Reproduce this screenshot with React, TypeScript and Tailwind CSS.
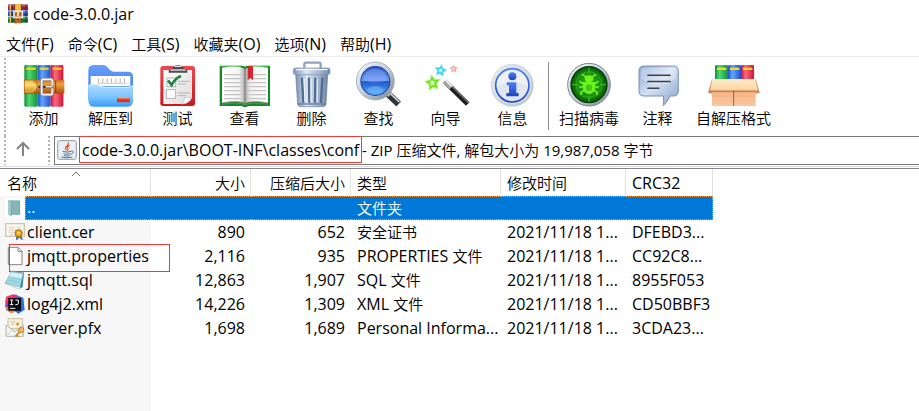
import React from "react";

type IconProps = { children: React.ReactNode };

/* Large toolbar drawings share one 138-unit canvas shown at 46px. */
function BigIcon({ children }: IconProps) {
  return (
    <svg viewBox="0 0 138 138" className="block size-[46px] overflow-visible" aria-hidden="true">
      {children}
    </svg>
  );
}

/* Row drawings share one 60-unit canvas shown at 20px. */
function SmallIcon({ children }: IconProps) {
  return (
    <svg viewBox="0 0 60 60" className="block size-5 shrink-0" aria-hidden="true">
      {children}
    </svg>
  );
}

/* Chinese runs are set one pixel smaller than the Latin text round them. */
function Mixed({ text }: { text: string }) {
  return (
    <>
      {text.split(/([\u4e00-\u9fff]+)/).map((part, i) =>
        i % 2 === 1 ? (
          <span key={i} className="text-[15px] font-[350]">
            {part}
          </span>
        ) : (
          part
        ),
      )}
    </>
  );
}

function Gradients() {
  return (
    <svg className="absolute size-0" aria-hidden="true">
      <defs>
        <linearGradient id="gGreen">
          <stop offset="0" stopColor="#128a35" />
          <stop offset=".35" stopColor="#4fd873" />
          <stop offset="1" stopColor="#14923a" />
        </linearGradient>
        <linearGradient id="gBlue">
          <stop offset="0" stopColor="#1d52c8" />
          <stop offset=".35" stopColor="#62a6fb" />
          <stop offset="1" stopColor="#1f4fd0" />
        </linearGradient>
        <linearGradient id="gRed">
          <stop offset="0" stopColor="#c90f35" />
          <stop offset=".35" stopColor="#fb6a80" />
          <stop offset="1" stopColor="#d80f35" />
        </linearGradient>
        <linearGradient id="gBelt" x2="0" y2="1">
          <stop offset="0" stopColor="#c87020" />
          <stop offset=".3" stopColor="#f0a040" />
          <stop offset="1" stopColor="#a8500c" />
        </linearGradient>
        <linearGradient id="gTip" x2="0" y2="1">
          <stop offset="0" stopColor="#e8a838" />
          <stop offset=".35" stopColor="#ffdc70" />
          <stop offset="1" stopColor="#c07818" />
        </linearGradient>
        <linearGradient id="gFolderBack" x2="0" y2="1">
          <stop offset="0" stopColor="#6aa0ff" />
          <stop offset="1" stopColor="#2a6ee8" />
        </linearGradient>
        <linearGradient id="gFolder" x2="0" y2="1">
          <stop offset="0" stopColor="#b4e0ff" />
          <stop offset=".6" stopColor="#7cc4ff" />
          <stop offset="1" stopColor="#3a9cff" />
        </linearGradient>
        <linearGradient id="gRedBoard" x2="0" y2="1">
          <stop offset="0" stopColor="#f2474c" />
          <stop offset="1" stopColor="#c8191e" />
        </linearGradient>
        <linearGradient id="gPaper" x2="1" y2="1">
          <stop offset="0" stopColor="#ffffff" />
          <stop offset="1" stopColor="#dcdcdc" />
        </linearGradient>
        <linearGradient id="gPageL">
          <stop offset="0" stopColor="#fff" />
          <stop offset=".75" stopColor="#f2f2f2" />
          <stop offset="1" stopColor="#a8a8a8" />
        </linearGradient>
        <linearGradient id="gPageR">
          <stop offset="0" stopColor="#a8a8a8" />
          <stop offset=".25" stopColor="#f2f2f2" />
          <stop offset="1" stopColor="#fff" />
        </linearGradient>
        <linearGradient id="gBin">
          <stop offset="0" stopColor="#7890b0" />
          <stop offset=".35" stopColor="#dce6f2" />
          <stop offset=".7" stopColor="#a6b8d0" />
          <stop offset="1" stopColor="#6c84a6" />
        </linearGradient>
        <linearGradient id="gSteel" x2="1" y2="1">
          <stop offset="0" stopColor="#f4f8fc" />
          <stop offset=".45" stopColor="#c8d2dc" />
          <stop offset="1" stopColor="#7c8894" />
        </linearGradient>
        <linearGradient id="gSilver" x2="1" y2="1">
          <stop offset="0" stopColor="#eef2f6" />
          <stop offset="1" stopColor="#b4c0cc" />
        </linearGradient>
        <linearGradient id="gLens" x2="0" y2="1">
          <stop offset="0" stopColor="#2a58c8" />
          <stop offset=".48" stopColor="#6f9cf0" />
          <stop offset=".52" stopColor="#2358d0" />
          <stop offset="1" stopColor="#58a8f8" />
        </linearGradient>
        <linearGradient id="gInfo" x2="0" y2="1">
          <stop offset="0" stopColor="#4a80f0" />
          <stop offset="1" stopColor="#1c46c4" />
        </linearGradient>
        <radialGradient id="gScan">
          <stop offset="0" stopColor="#2fb41a" />
          <stop offset=".7" stopColor="#1c8c12" />
          <stop offset="1" stopColor="#0a5a08" />
        </radialGradient>
        <linearGradient id="gBubble" x2="1" y2="1">
          <stop offset="0" stopColor="#8ca8d4" />
          <stop offset=".45" stopColor="#d4e0f2" />
          <stop offset="1" stopColor="#86a0c8" />
        </linearGradient>
        <linearGradient id="gBox" x2="0" y2="1">
          <stop offset="0" stopColor="#e89868" />
          <stop offset="1" stopColor="#fcc8a0" />
        </linearGradient>
        <linearGradient id="gFlap" x2="0" y2="1">
          <stop offset="0" stopColor="#ffeccc" />
          <stop offset="1" stopColor="#fdd6a0" />
        </linearGradient>
      </defs>
    </svg>
  );
}

const AddIcon = () => (
  <BigIcon>
    <rect x="10" y="9" width="40" height="125" rx="4" fill="url(#gGreen)" />
    <rect x="50" y="9" width="39" height="125" rx="4" fill="url(#gBlue)" />
    <rect x="89" y="9" width="38" height="125" rx="4" fill="url(#gRed)" />
    <path d="M16 17h28v6H16zM56 17h27v6H56zM95 17h27v6H95z" fill="#ffd71e" />
    <rect x="10" y="54" width="120" height="41" rx="4" fill="url(#gBelt)" />
    <path d="M10 54h25q14 9 14 20t-14 21H10z" fill="url(#gTip)" stroke="#a86010" strokeWidth="2" />
    <path d="M15 60h18q9 6 9 14t-9 15H15" fill="none" stroke="#fff0a8" strokeWidth="2" strokeDasharray="4 3" />
    <circle cx="56" cy="75" r="4" fill="#54280a" />
    <rect x="62" y="52" width="32" height="46" rx="5" fill="none" stroke="#8c8c8c" strokeWidth="9" />
    <rect x="62" y="52" width="32" height="46" rx="5" fill="none" stroke="#f2f2f2" strokeWidth="5" />
    <path d="M76 75h20" stroke="#6e6e6e" strokeWidth="8" />
    <path d="M74 74h20" stroke="#f4f4f4" strokeWidth="4" />
    <circle cx="70" cy="75" r="4" fill="#54280a" />
    <path d="M104 56v37" stroke="#8c440c" strokeWidth="3" />
  </BigIcon>
);

const ExtractIcon = () => (
  <BigIcon>
    <path d="M1 24Q2 9 18 9h28q7 0 12 6l8 9q5 5 12 5h42q15 0 15 15v68H1z" fill="url(#gFolderBack)" />
    <path d="M8 42h119v30H8z" fill="#fff" />
    <path d="M30 56h82" stroke="#b8b8b8" strokeWidth="14" strokeDasharray="3 10" />
    <path d="M28 64h88" stroke="#d8d8d8" strokeWidth="5" />
    <path d="M1 73q0-7 9-7h12q7 0 13 4t14 4h72q14 0 14-12v54q0 18-18 18H19q-18 0-18-18z" fill="url(#gFolder)" />
    <path d="M3 74q1-6 9-6h10q7 0 13 4t14 4h72q8 0 12-5" fill="none" stroke="#dff3ff" strokeWidth="3" />
    <rect x="87" y="108" width="38" height="13" rx="2" fill="#d93218" />
    <path d="M89 110h34" stroke="#ff8260" strokeWidth="3" />
  </BigIcon>
);

const TestIcon = () => (
  <BigIcon>
    <rect x="16" y="12" width="104" height="120" rx="8" fill="url(#gRedBoard)" />
    <path d="M25 24h86v82q-4 17-28 20H25z" fill="url(#gPaper)" />
    <path d="M111 104q-10 6-23 3 2 13-8 19 23 0 31-22z" fill="#fff" stroke="#bababa" strokeWidth="2" />
    <path d="M41 28q0-8 8-8h3q3-11 17-11t17 11h3q8 0 8 8v4H41z" fill="#4c4c50" />
    <path d="M46 24h46" stroke="#c8c8cc" strokeWidth="5" />
    <path d="M58 13h22" stroke="#e4e4e4" strokeWidth="4" />
    <rect x="36" y="48" width="26" height="26" fill="#fff" stroke="#b2b2b2" strokeWidth="3" />
    <rect x="34" y="83" width="28" height="26" fill="#fff" stroke="#b2b2b2" strokeWidth="3" />
    <path d="M39 55l11 14Q60 49 78 42" fill="none" stroke="#23823c" strokeWidth="8" />
    <path d="M68 58h36M68 66h26M68 93h36M68 101h24" stroke="#b0b0b0" strokeWidth="3" />
  </BigIcon>
);

const ViewIcon = () => (
  <BigIcon>
    <path d="M-7 11h66q9 0 10 4 1-4 10-4h65v121H78l-4 3H64l-4-3H-7z" fill="#128a25" />
    <path d="M-5 13h62M81 13h61" stroke="#48c558" strokeWidth="3" />
    <path d="M0 17q53-9 69 5v102q-17-10-69-1z" fill="url(#gPageL)" />
    <path d="M138 17q-53-9-69 5v102q17-10 69-1z" fill="url(#gPageR)" />
    <path d="M0 123q52-9 69 2 17-11 69-2M0 127q52-9 69 2 17-11 69-2" fill="none" stroke="#888" strokeWidth="2" />
    <path
      d="M6 38h51M6 50h51M6 62h51M6 74h51M6 86h51M6 98h51M6 110h51M81 38h51M81 50h51M81 62h51M81 74h51M81 86h51M81 98h51M81 110h51"
      stroke="#c4c4c4"
      strokeWidth="4"
    />
    <path d="M77 13h16v42l-8-8-8 8z" fill="#d8232c" />
    <path d="M69 20v108" stroke="#777" strokeWidth="3" />
  </BigIcon>
);

const DeleteIcon = () => (
  <BigIcon>
    <path d="M46 20V7q0-5 5-5h39q5 0 5 5v13" fill="none" stroke="#8fa4c0" strokeWidth="7" />
    <path d="M20 36h96l-5 91q-1 6-8 7H34q-7-1-8-7z" fill="url(#gBin)" stroke="#64799a" strokeWidth="2" />
    <rect x="13" y="18" width="110" height="20" rx="7" fill="url(#gBin)" stroke="#7e93b0" strokeWidth="2" />
    <path d="M20 23h96" stroke="#eef4fc" strokeWidth="4" />
    <path d="M39 50l4 70M60 50l1 70M79 50l-1 70M100 50l-4 70" stroke="#536c90" strokeWidth="7" strokeLinecap="round" />
    <path d="M45 50l3 70M66 50v70M85 50l-1 70" stroke="#f2f6fc" strokeWidth="3" />
    <path d="M26 126h84" stroke="#647c9e" strokeWidth="4" />
  </BigIcon>
);

const FindIcon = () => (
  <BigIcon>
    <path d="M94 94l34 32" stroke="#30343c" strokeWidth="20" />
    <path d="M98 90l32 30" stroke="#dce0e6" strokeWidth="5" />
    <path d="M88 96l12-12 9 9-12 12z" fill="#b0b8c2" />
    <circle cx="58" cy="57" r="57" fill="url(#gSteel)" stroke="#929ea8" strokeWidth="2" />
    <circle cx="58" cy="57" r="45" fill="#1b3d9c" />
    <circle cx="58" cy="57" r="42" fill="url(#gLens)" />
    <path d="M24 55q1-33 34-35 33 2 34 35-34 14-68 0z" fill="#a8c4ff" opacity=".3" />
    <ellipse cx="58" cy="84" rx="25" ry="11" fill="#82ccff" opacity=".45" />
  </BigIcon>
);

const star = "M0-10 3-4 10-3 5 2 6 9 0 6-6 9-5 2-10-3-3-4z";

const WizardIcon = () => (
  <BigIcon>
    <path d={star} transform="translate(29 62) rotate(-8) scale(2.3)" fill="#6be31e" stroke="#b8f580" />
    <path d={star} transform="translate(28 62) rotate(-8) scale(1)" fill="#d8fcae" />
    <path d={star} transform="translate(53 25) rotate(12) scale(1.8)" fill="#35ccf4" stroke="#9be8fc" />
    <path d={star} transform="translate(53 25) rotate(12) scale(.8)" fill="#bdf4ff" />
    <path d={star} transform="translate(92 20) scale(1.2)" fill="#ff9696" />
    <path d={star} transform="translate(92 20) scale(.5)" fill="#ffe2e2" />
    <path d="M67 60l67 66" stroke="#202020" strokeWidth="15" />
    <path d="M70 56l67 66" stroke="#777" strokeWidth="4" />
    <path d="M64 57l20 20" stroke="#a6a6a6" strokeWidth="15" />
    <path d="M67 53l20 20" stroke="#f2f2f2" strokeWidth="6" />
  </BigIcon>
);

const InfoIcon = () => (
  <BigIcon>
    <circle cx="67" cy="70" r="63" fill="url(#gSilver)" stroke="#c0cad4" strokeWidth="2" />
    <circle cx="67" cy="70" r="56" fill="#dfe5eb" />
    <circle cx="67" cy="70" r="50" fill="#dfe6ee" stroke="url(#gInfo)" strokeWidth="5" />
    <path d="M20 72q47-20 94 0-2-44-47-46-45 2-47 46z" fill="#fff" opacity=".45" />
    <circle cx="67" cy="43" r="12" fill="url(#gInfo)" />
    <path d="M50 61h29v32h7v10H49V93h8V70h-7z" fill="url(#gInfo)" />
  </BigIcon>
);

const ScanIcon = () => (
  <BigIcon>
    <circle cx="69" cy="68" r="64" fill="url(#gSteel)" stroke="#7e8894" strokeWidth="3" />
    <circle cx="69" cy="68" r="56" fill="#073c08" />
    <circle cx="69" cy="68" r="52" fill="url(#gScan)" />
    <circle cx="69" cy="68" r="39" fill="none" stroke="#2aa81c" strokeWidth="3" />
    <path d="M69 17v18M69 101v18M18 68h18M102 68h18" stroke="#32b822" strokeWidth="4" />
    <g stroke="#6cf51f" strokeWidth="5" fill="none">
      <path d="M61 48l-8-9h-6M77 48l8-9h6M53 65l-13-7M85 65l13-7M52 75H39M86 75h13M54 85l-9 6v8M84 85l9 6v8" />
    </g>
    <ellipse cx="69" cy="50" rx="13" ry="10" fill="#6cf51f" />
    <path d="M51 60h36l1 16q-3 20-19 20T50 76z" fill="#6cf51f" />
    <circle cx="69" cy="77" r="10" fill="#2d9e14" opacity=".55" />
  </BigIcon>
);

const CommentIcon = () => (
  <BigIcon>
    <path
      d="M27 12h88q15 0 15 15v60q0 15-15 15h-10q-8 19-20 29 2-15 0-29H27q-15 0-15-15V27q0-15 15-15z"
      fill="url(#gBubble)"
      stroke="#7890b4"
      strokeWidth="3"
    />
    <path d="M29 17h84q11 0 11 11v20Q70 82 18 50V28q0-11 11-11z" fill="#fff" opacity=".28" />
    <path d="M39 40h66M39 59h66M39 79h32" stroke="#394152" strokeWidth="5" strokeLinecap="round" />
    <path d="M39 44h66M39 63h66M39 83h32" stroke="#f2f7ff" strokeWidth="2" />
  </BigIcon>
);

const SfxIcon = () => (
  <BigIcon>
    <rect x="12" y="9" width="39" height="52" rx="4" fill="url(#gGreen)" />
    <rect x="51" y="9" width="39" height="52" rx="4" fill="url(#gBlue)" />
    <rect x="90" y="9" width="39" height="52" rx="4" fill="url(#gRed)" />
    <path d="M18 17h28v7H18zM57 17h28v7H57zM96 17h28v7H96z" fill="#ffd71e" />
    <path d="M3 52h131v80H3z" fill="url(#gBox)" />
    <path d="M3 52-9 92l12 3zM134 52l12 40-12 3z" fill="#c98262" />
    <path d="M3 52h131l12 37H68L3 87z" fill="#e4a070" opacity=".4" />
    <path d="M4 51h128l9 34H-3z" fill="url(#gFlap)" />
    <path d="M3 88h131" stroke="#c87c50" strokeWidth="4" />
    <path d="M68 86v46" stroke="#a85c3c" strokeWidth="3" />
    <path d="M3 98h62M72 98h61M3 110h62M72 110h61" stroke="#ffd6b4" strokeWidth="2" opacity=".5" />
  </BigIcon>
);

const AppIcon = () => (
  <SmallIcon>
    <path d="M0 2h60v16H0z" fill="#8c2444" />
    <path d="M0 2h60v6H0z" fill="#c2486a" />
    <path d="M0 20h60v17H0z" fill="#2348b4" />
    <path d="M0 20h60v6H0z" fill="#5a80e0" />
    <path d="M0 39h60v17H0z" fill="#14702c" />
    <path d="M0 39h60v6H0z" fill="#44a858" />
    <path d="M7 2v15M7 21v15M7 40v15" stroke="#f0c848" strokeWidth="4" />
    <path d="M12 2v15M12 21v15M12 40v15M54 2v54" stroke="#2a1838" strokeWidth="2" />
    <path d="M20 0h20v58H20z" fill="#b86c20" />
    <path d="M21 0h18v18q-9 9-18 0z" fill="#f4bc44" />
    <path d="M20 0v58M40 0v58" stroke="#6c380c" strokeWidth="2" />
    <rect x="18" y="22" width="25" height="18" fill="none" stroke="#e8e8e8" strokeWidth="5" />
    <path d="M30 20v16" stroke="#fff" strokeWidth="4" />
    <circle cx="30" cy="47" r="2" fill="#4c240a" />
  </SmallIcon>
);

const JarIcon = () => (
  <SmallIcon>
    <rect x="2" y="2" width="56" height="56" rx="6" fill="#e9eff5" stroke="#8e9aa6" strokeWidth="3" />
    <path d="M34 7q2 7-5 12t0 12M38 16q-9 5-6 9t-1 8" fill="none" stroke="#e8622c" strokeWidth="4" />
    <path d="M17 34q14 5 26 0M19 41q11 4 21 0M21 47q8 3 17 0M13 51q16 5 33 0M43 33q9 0 4 7l-6 4" fill="none" stroke="#4d7796" strokeWidth="3" />
  </SmallIcon>
);

const FolderIcon = () => (
  <SmallIcon>
    <path d="M0 0h60v60H0z" fill="#fff" />
    <path d="M9 7h35v43H9z" fill="#7fb2b2" />
    <path d="M9 7l10 5v44L9 49z" fill="#a4cbd0" />
    <path d="M19 11h25v39H19z" fill="#86b5b2" />
    <path d="M19 12v43M44 9v41" stroke="#6a9fa2" strokeWidth="2" />
  </SmallIcon>
);

const CertIcon = () => (
  <SmallIcon>
    <path d="M2 5h56v38H2z" fill="#fbf8ef" stroke="#d0c6ae" strokeWidth="4" />
    <path d="M12 17h17M36 17h12M10 24h24M10 31h22M14 38h14" stroke="#d6d0c4" strokeWidth="3" />
    <path d="M34 38l-1 17 7-4 4-9zM46 38l9 15-8-1-5-8z" fill="#2d6fd0" />
    <circle cx="41" cy="34" r="11" fill="#e5a322" stroke="#a86f08" strokeWidth="3" />
    <circle cx="41" cy="33" r="4" fill="#ffe07c" />
  </SmallIcon>
);

const PageIcon = () => (
  <SmallIcon>
    <path d="M10 4h30l11 11v41H10z" fill="#fff" stroke="#858585" strokeWidth="3" />
    <path d="M39 4v12h12" fill="#eee" stroke="#858585" strokeWidth="3" />
  </SmallIcon>
);

const NotepadIcon = () => (
  <SmallIcon>
    <path d="M19 4l38 4-4 42q-4 6-10 5L0 40z" fill="#3f8794" />
    <path d="M19 4l36 5-9 38q-3 7-11 5L1 39z" fill="#9fd7e2" />
    <path d="M19 7l34 6-4 12-36-6z" fill="#d4f2f6" />
    <path d="M19 4l37 5" stroke="#83959b" strokeWidth="5" strokeDasharray="3 2" />
    <path d="M1 39l33 11q9 3 13-4l-2 8q-3 4-10 2z" fill="#f5f6f6" stroke="#8a999d" />
    <path d="M14 22l33 7M10 30l34 8" stroke="#84c6d4" strokeWidth="2" />
  </SmallIcon>
);

const IdeaIcon = () => (
  <SmallIcon>
    <path d="M3 8L24 1l11 15L11 42 0 27z" fill="#f23a68" />
    <path d="M0 32l21-16 12 35-15 6L4 48z" fill="#7f42c8" />
    <path d="M31 3l24 8 4 36-19 12-15-12z" fill="#246ce8" />
    <path d="M0 40l19-2 11 16-13 4z" fill="#f58a32" />
    <path d="M24 1l13 2 6 10H25z" fill="#bd3fa6" />
    <path d="M10 12h38v38H10z" fill="#08090b" />
    <path d="M15 18h10M20 18v14M15 32h10M31 18h9v10q0 5-9 4" fill="none" stroke="#fff" strokeWidth="3" />
    <path d="M15 43h16" stroke="#fff" strokeWidth="3" />
  </SmallIcon>
);

const PfxIcon = () => (
  <SmallIcon>
    <path d="M9 2h43v30H9z" fill="#f7f1df" stroke="#c8bea4" strokeWidth="3" />
    <path d="M17 11h14M17 18h11" stroke="#b9b29f" strokeWidth="2" />
    <circle cx="38" cy="18" r="5" fill="#d4a237" />
    <path d="M3 21l27 20 25-20v34H3z" fill="#f4f4f2" stroke="#b5b5b0" strokeWidth="3" />
    <path d="M3 54l20-19M55 54L36 36" stroke="#c4c4bf" strokeWidth="2" />
    <circle cx="49" cy="36" r="8" fill="#edb450" stroke="#a86c20" strokeWidth="2" />
    <path d="M44 41L31 56M35 51l6 6" stroke="#c88930" strokeWidth="5" />
    <circle cx="51" cy="34" r="2" fill="#fff" />
  </SmallIcon>
);

const menus = ["文件(F)", "命令(C)", "工具(S)", "收藏夹(O)", "选项(N)", "帮助(H)"];

const mainTools = [
  { label: "添加", Icon: AddIcon },
  { label: "解压到", Icon: ExtractIcon },
  { label: "测试", Icon: TestIcon },
  { label: "查看", Icon: ViewIcon },
  { label: "删除", Icon: DeleteIcon },
  { label: "查找", Icon: FindIcon },
  { label: "向导", Icon: WizardIcon },
  { label: "信息", Icon: InfoIcon },
];

const extraTools = [
  { label: "扫描病毒", Icon: ScanIcon },
  { label: "注释", Icon: CommentIcon },
  { label: "自解压格式", Icon: SfxIcon },
];

const files = [
  { name: "client.cer", Icon: CertIcon, size: "890", packed: "652", type: "安全证书", crc: "DFEBD3..." },
  { name: "jmqtt.properties", Icon: PageIcon, size: "2,116", packed: "935", type: "PROPERTIES 文件", crc: "CC92C8...", marked: true },
  { name: "jmqtt.sql", Icon: NotepadIcon, size: "12,863", packed: "1,907", type: "SQL 文件", crc: "8955F053" },
  { name: "log4j2.xml", Icon: IdeaIcon, size: "14,226", packed: "1,309", type: "XML 文件", crc: "CD50BBF3" },
  { name: "server.pfx", Icon: PfxIcon, size: "1,698", packed: "1,689", type: "Personal Informa...", crc: "3CDA23..." },
];

function ToolButton({ label, Icon }: { label: string; Icon: () => React.ReactNode }) {
  return (
    <button type="button" className="flex min-w-[67px] flex-col items-center px-1 text-[15px] leading-5 font-[350] whitespace-nowrap">
      <Icon />
      {label}
    </button>
  );
}

function Grip() {
  return <div className="w-0.5 shrink-0 self-stretch bg-[repeating-linear-gradient(#b4b4b4_0_2px,transparent_2px_4px)]" />;
}

const headCell = "border-r border-[#e2e2e2] text-[15px] font-[350]";
const selectedCell = "border-y border-dotted border-[#ff9a3c] bg-[#0078d7]";

export default function App() {
  return (
    <div className="flex min-h-screen flex-col overflow-hidden bg-white font-['Open_Sans','Noto_Sans_CJK_SC',sans-serif] text-[16px] leading-6 text-black">
      <Gradients />
      <header className="flex h-7 items-center gap-[5px] pl-2">
        <AppIcon />
        <h1>code-3.0.0.jar</h1>
      </header>
      <nav className="flex h-[29px] items-end gap-3.5 border-b border-[#ececec] pl-1.5">
        {menus.map((m) => (
          <button key={m} type="button" className="leading-6">
            <Mixed text={m} />
          </button>
        ))}
      </nav>

      <div className="flex h-[79px] pt-px pl-1">
        <Grip />
        <div className="flex items-start pt-1 pl-1">
          {mainTools.map((t) => (
            <ToolButton key={t.label} {...t} />
          ))}
          <div className="mx-0.5 h-[68px] w-px bg-[#8c8c8c]" />
          <div className="flex gap-px pl-1">
            {extraTools.map((t) => (
              <ToolButton key={t.label} {...t} />
            ))}
          </div>
        </div>
      </div>

      <div className="flex h-[31px] border-b border-[#dcdcdc] pb-px pl-1">
        <Grip />
        <button type="button" aria-label="Up one level" className="flex w-[42px] justify-center pt-[5px] pr-2">
          <svg viewBox="0 0 16 16" className="size-4" fill="none" stroke="#848484" strokeWidth="2" aria-hidden="true">
            <path d="M8 15V2M2 8l6-6 6 6" />
          </svg>
        </button>
        <Grip />
        <div className="ml-1 flex h-[29px] flex-1 items-start border border-r-0 border-[#7a7a7a] pl-0.5 whitespace-nowrap">
          <span className="mt-[3px] mr-0.5">
            <JarIcon />
          </span>
          <input
            aria-label="Archive path"
            defaultValue="code-3.0.0.jar\BOOT-INF\classes\conf"
            className="-mt-px h-[27px] w-[283px] border border-[#f03a3a] pl-0.5 outline-none"
          />
          <span className="pt-px text-[15px]">
            <Mixed text="- ZIP 压缩文件, 解包大小为 19,987,058 字节" />
          </span>
        </div>
      </div>

      <main className="mt-px flex-1 border-t border-[#828790] bg-[linear-gradient(#f7f7f7,#f7f7f7)] bg-[length:151px_100%] bg-no-repeat">
        <div className="bg-[linear-gradient(#fff,#fff)] bg-[length:100%_27px] bg-no-repeat">
          <table className="w-[713px] table-fixed border-separate border-spacing-0">
            <colgroup>
              <col className="w-[151px]" />
              <col className="w-[100px]" />
              <col className="w-[100px]" />
              <col className="w-[150px]" />
              <col className="w-[125px]" />
              <col className="w-[87px]" />
            </colgroup>
            <thead>
              <tr className="h-[27px]">
                <th className={`${headCell} relative pl-[7px] text-left`}>
                  <svg viewBox="0 0 10 6" className="absolute top-0.5 left-[71px] h-1.5 w-2.5" fill="none" stroke="#777" aria-hidden="true">
                    <path d="M1 5l4-4 4 4" />
                  </svg>
                  名称
                </th>
                <th className={`${headCell} pr-[5px] text-right`}>大小</th>
                <th className={`${headCell} pr-[5px] text-right`}>压缩后大小</th>
                <th className={`${headCell} pl-1.5 text-left`}>类型</th>
                <th className={`${headCell} pl-1.5 text-left`}>修改时间</th>
                <th className="border-r border-[#e2e2e2] pl-1.5 text-left font-normal">CRC32</th>
              </tr>
            </thead>
            <tbody>
              <tr className="h-6 text-white">
                <td className="p-0">
                  <div className="flex h-6 items-center pl-[5px]">
                    <FolderIcon />
                    <span className="h-6 flex-1 border-y border-l border-dotted border-[#ff9a3c] bg-[#0078d7] pl-px leading-5">..</span>
                  </div>
                </td>
                <td className={selectedCell} />
                <td className={selectedCell} />
                <td className={`${selectedCell} px-1.5 py-0 text-[15px] leading-[22px] font-[350]`}>文件夹</td>
                <td className={selectedCell} />
                <td className={`${selectedCell} border-r`} />
              </tr>
              {files.map(({ name, Icon, size, packed, type, crc, marked }) => (
                <tr key={name} className="h-6 whitespace-nowrap">
                  <td className="relative p-0">
                    <div className="flex h-6 items-center gap-0.5 pl-[5px]">
                      <Icon />
                      {name}
                    </div>
                    {marked && <div className="absolute top-0 left-[9px] h-7 w-[161px] border border-[#f03a3a]" />}
                  </td>
                  <td className="px-1.5 py-0 text-right">{size}</td>
                  <td className="px-1.5 py-0 text-right">{packed}</td>
                  <td className="px-1.5 py-0">
                    <Mixed text={type} />
                  </td>
                  <td className="px-1.5 py-0">2021/11/18 1...</td>
                  <td className="px-1.5 py-0">{crc}</td>
                </tr>
              ))}
            </tbody>
          </table>
        </div>
      </main>
    </div>
  );
}
